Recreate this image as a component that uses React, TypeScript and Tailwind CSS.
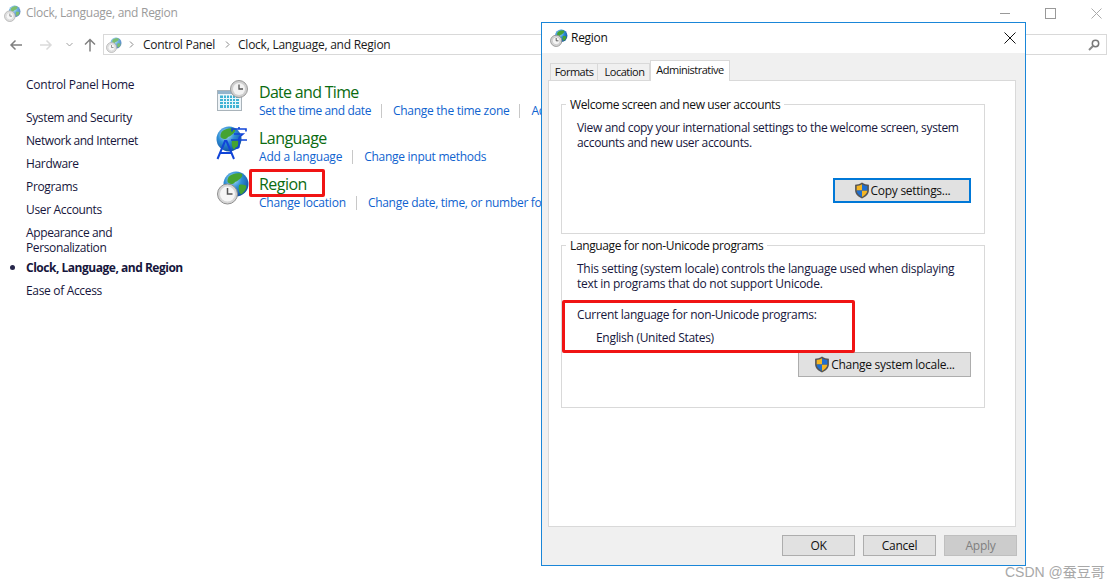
import React from "react";

const Globe = ({ id, cx, cy, r }: { id: string; cx: number; cy: number; r: number }) => (
  <>
    <defs>
      <radialGradient id={id} cx="0.38" cy="0.32" r="0.75">
        <stop offset="0" stopColor="#bfe6f5" />
        <stop offset="0.45" stopColor="#2f8fd6" />
        <stop offset="1" stopColor="#0f4a9c" />
      </radialGradient>
    </defs>
    <circle cx={cx} cy={cy} r={r} fill={`url(#${id})`} />
    <path
      transform={`translate(${cx - r} ${cy - r}) scale(${r / 12})`}
      d="M5 5c3-3 8-4 12-3 2 1 1 3-1 5-2 1-3 3-5 3-1 2-4 3-6 1C3 10 4 7 5 5zM15 13c3-1 6 0 7 1 0 3-2 6-5 8-2-1-3-6-2-9z"
      fill="#45a332"
    />
  </>
);

const ClockGlobe = ({ size = 16, id, className = "" }: { size?: number; id: string; className?: string }) => (
  <svg width={size} height={size} viewBox="0 0 32 32" className={`shrink-0 ${className}`}>
    <Globe id={id} cx={20} cy={12} r={11} />
    <circle cx="11" cy="21" r="10" fill="#d8d8d8" stroke="#8d8d8d" strokeWidth="1.500" />
    <circle cx="11" cy="21" r="7" fill="#f4f4f4" stroke="#b5b5b5" />
    <path d="M11 16v5h4" fill="none" stroke="#444" strokeWidth="1.500" />
  </svg>
);

const CalendarIcon = () => (
  <svg width="32" height="32" viewBox="0 0 32 32" className="mt-[-2px]">
    <rect x="1.500" y="10.500" width="24" height="20" fill="#eef4f8" stroke="#a9b3ba" />
    <rect x="2" y="11" width="23" height="3" fill="#93b4cc" />
    <rect x="4" y="15.500" width="19" height="12.500" fill="#3fb2d4" />
    <path d="M7.500 15v13M10.500 15v13M13.500 15v13M16.500 15v13M19.500 15v13M4 18.500h19M4 21.500h19M4 24.500h19" stroke="#e8f6fb" strokeWidth="1" />
    <circle cx="23" cy="9" r="8.500" fill="#cfcfcf" stroke="#9a9a9a" />
    <circle cx="23" cy="9" r="6" fill="#f3f3f3" />
    <path d="M23 4.500V9h4" fill="none" stroke="#555" strokeWidth="1.300" />
  </svg>
);

const LanguageIcon = () => (
  <svg width="33" height="34" viewBox="0 0 33 34" className="mt-[-2px] ml-[-1px]">
    <Globe id="lang-globe" cx={14} cy={13} r={12.500} />
    <path d="M2.500 33L10 15h1.500L19 33M5.500 27h10.500" fill="none" stroke="#1144d8" strokeWidth="2" />
    <path d="M17 5.500v-2.500h14v2.500M24 1v2M19 8h9l-4 3.500M16 14h16M24 11.500v9c0 1.500-1 2-4 2" fill="none" stroke="#1144d8" strokeWidth="1.600" />
  </svg>
);

const RegionIcon = () => (
  <svg width="33" height="34" viewBox="0 0 33 34" className="mt-[-3px]">
    <Globe id="region-globe" cx={20} cy={13} r={12.500} />
    <circle cx="11.500" cy="23" r="10" fill="#d6d6d6" stroke="#8f8f8f" />
    <circle cx="11.500" cy="23" r="7.500" fill="#f6f6f6" />
    <path d="M11.500 17v6h5" fill="none" stroke="#555" strokeWidth="1.500" />
  </svg>
);

const Shield = () => (
  <svg width="16" height="17" viewBox="0 0 15 16" className="shrink-0">
    <path d="M7.500.500C5.500 2 3 2.500 1 2.500V8c0 3.500 3 6 6.500 7.500C11 14 14 11.500 14 8V2.500c-2 0-4.500-.5-6.500-2z" fill="#555" />
    <path d="M7.500 2C6 3 4 3.500 2.500 3.700V8h5zM7.500 8v6c2.500-1.200 5-3.200 5-6z" fill="#f5b623" />
    <path d="M7.500 2c1.500 1 3.500 1.500 5 1.700V8h-5zM7.500 8v6C5 12.800 2.500 10.800 2.500 8z" fill="#1f6fd0" />
  </svg>
);

const Sep = () => <span className="ml-[10px] mr-[11px] h-[14px] w-px shrink-0 bg-[#c8c8c8]" />;

const L = ({ children, className }: { children: React.ReactNode; className: string }) => (
  <span className={`whitespace-nowrap text-[12px] leading-[16px] text-[#0f63cf] ${className}`}>{children}</span>
);

type LinkDef = { text: string; className: string };

const Category = ({ icon, title, titleClass, links }: { icon: React.ReactNode; title: string; titleClass: string; links: LinkDef[] }) => (
  <div className="flex h-[46px]">
    <div className="w-[43px] shrink-0">{icon}</div>
    <div className="min-w-0">
      <div className={`h-[21px] whitespace-nowrap text-[16px] leading-[21px] text-[#0b6b10] ${titleClass}`}>{title}</div>
      <div className="flex items-center">
        {links.map((l, i) => (
          <React.Fragment key={l.text}>
            {i > 0 && <Sep />}
            <L className={l.className}>{l.text}</L>
          </React.Fragment>
        ))}
      </div>
    </div>
  </div>
);

const Side = ({ children, className = "tracking-[-0.33px]" }: { children: React.ReactNode; className?: string }) => (
  <div className={`text-[12px] leading-[15px] text-[#16163c] ${className}`}>{children}</div>
);

const Btn = ({ children, className = "" }: { children: React.ReactNode; className?: string }) => (
  <button className={`flex h-[21px] w-[73px] items-center justify-center border text-[12px] tracking-[-0.28px] ${className}`}>{children}</button>
);

const Legend = ({ children }: { children: React.ReactNode }) => (
  <div className="absolute left-[4px] top-[-8px] whitespace-nowrap bg-white px-[4px] text-[12px] leading-[15px] tracking-[-0.38px] text-[#111]">{children}</div>
);

const P = ({ children, className = "" }: { children: React.ReactNode; className?: string }) => (
  <div className={`text-[12px] leading-[15px] text-[#16163c] ${className}`}>{children}</div>
);

const Tab = ({ children, className = "" }: { children: React.ReactNode; className?: string }) => (
  <div className={`flex items-center justify-center border border-b-0 border-[#d9d9d9] text-[11px] tracking-[-0.5px] text-[#111] ${className}`}>{children}</div>
);

const Chevron = ({ className = "" }: { className?: string }) => (
  <svg width="5" height="7" viewBox="0 0 5 7" className={`shrink-0 ${className}`}><path d="M1 .5l3 3-3 3" fill="none" stroke="#888" /></svg>
);

export default function App() {
  return (
    <div className="relative h-[588px] w-[1120px] overflow-hidden bg-white font-['Open_Sans','Noto_Sans',sans-serif]">
      {/* Title bar */}
      <div className="flex h-[26px] items-center pl-[4px]">
        <ClockGlobe size={17} id="g1" className="opacity-70" />
        <span className="ml-[5px] text-[12px] tracking-[-0.28px] text-[#9b9b9b]">Clock, Language, and Region</span>
        <div className="ml-auto flex items-center pr-[18px]">
          <svg width="10" height="10" viewBox="0 0 10 10" className="mr-[35px]"><path d="M0 5.500h10" stroke="#999" /></svg>
          <svg width="11" height="11" viewBox="0 0 11 11" className="mr-[35px]"><rect x=".5" y=".5" width="10" height="10" fill="none" stroke="#999" /></svg>
          <svg width="11" height="11" viewBox="0 0 11 11"><path d="M.5.500l10 10M10.500.500l-10 10" stroke="#aaa" /></svg>
        </div>
      </div>
      {/* Nav bar */}
      <div className="mt-[8px] flex h-[21px] items-center">
        <svg width="14" height="12" viewBox="0 0 14 12" className="ml-[9px]"><path d="M13 6H2M6.500 1.500L2 6l4.500 4.500" fill="none" stroke="#808080" strokeWidth="1.500" /></svg>
        <svg width="14" height="12" viewBox="0 0 14 12" className="ml-[16px]"><path d="M1 6h11M7.500 1.500L12 6l-4.500 4.500" fill="none" stroke="#dadada" strokeWidth="1.500" /></svg>
        <svg width="7" height="5" viewBox="0 0 7 5" className="ml-[13px]"><path d="M.5 1l3 3 3-3" fill="none" stroke="#a0a0a0" /></svg>
        <svg width="12" height="14" viewBox="0 0 12 14" className="ml-[11px]"><path d="M6 13.500V2M1 6.500L6 1.500l5 5" fill="none" stroke="#808080" strokeWidth="1.500" /></svg>
        <div className="ml-[7px] flex h-[21px] w-[972px] shrink-0 items-center border border-r-0 border-[#d9d9d9] pl-[2px]">
          <ClockGlobe size={16} id="g2" className="opacity-70" />
          <Chevron className="ml-[7px]" />
          <span className="ml-[9px] text-[12px] tracking-[-0.28px] text-[#1a1a1a]">Control Panel</span>
          <Chevron className="ml-[10px]" />
          <span className="ml-[8px] text-[12px] tracking-[-0.25px] text-[#1a1a1a]">Clock, Language, and Region</span>
        </div>
        <div className="flex h-[21px] w-[32px] shrink-0 items-center justify-end border border-l-0 border-[#d9d9d9] pr-[6px]">
          <svg width="12" height="12" viewBox="0 0 12 12"><circle cx="7.500" cy="4.500" r="3.200" fill="none" stroke="#777" strokeWidth="1.500" /><path d="M5 7l-4 4" stroke="#888" strokeWidth="2" /></svg>
        </div>
      </div>
      {/* Body */}
      <div className="flex">
        <div className="w-[216px] shrink-0 pl-[26px] pt-[22px]">
          <Side className="tracking-[-0.25px]">Control Panel Home</Side>
          <Side className="mt-[18px] tracking-[-0.36px]">System and Security</Side>
          <Side className="mt-[8px] tracking-[-0.43px]">Network and Internet</Side>
          <Side className="mt-[8px] tracking-[-0.33px]">Hardware</Side>
          <Side className="mt-[8px] tracking-[-0.33px]">Programs</Side>
          <Side className="mt-[8px] tracking-[-0.33px]">User Accounts</Side>
          <Side className="mt-[8px] tracking-[-0.38px]">Appearance and<br />Personalization</Side>
          <Side className="relative mt-[5px] font-bold tracking-[-0.48px]">
            <span className="absolute left-[-16px] top-[5px] h-[5px] w-[5px] rounded-full bg-[#26264a]" />
            Clock, Language, and Region
          </Side>
          <Side className="mt-[8px] tracking-[-0.33px]">Ease of Access</Side>
        </div>
        <div className="w-[325px] shrink-0 overflow-hidden pt-[27px]">
          <Category
            icon={<CalendarIcon />}
            title="Date and Time"
            titleClass="tracking-[-0.7px]"
            links={[
              { text: "Set the time and date", className: "tracking-[-0.38px]" },
              { text: "Change the time zone", className: "tracking-[-0.28px]" },
              { text: "Ad", className: "tracking-[-0.28px]" },
            ]}
          />
          <Category
            icon={<LanguageIcon />}
            title="Language"
            titleClass="tracking-[-0.55px]"
            links={[
              { text: "Add a language", className: "tracking-[-0.2px]" },
              { text: "Change input methods", className: "tracking-[-0.28px]" },
            ]}
          />
          <Category
            icon={<RegionIcon />}
            title="Region"
            titleClass="tracking-[-0.55px]"
            links={[
              { text: "Change location", className: "tracking-[-0.2px]" },
              { text: "Change date, time, or number formats", className: "tracking-[-0.28px]" },
            ]}
          />
        </div>
      </div>

      {/* Red annotation on Region */}
      <div className="absolute left-[249px] top-[169px] h-[28px] w-[76px] rounded-[2px] border-[3px] border-[#f01414]" />

      {/* Region dialog */}
      <div className="absolute left-[541px] top-[22px] flex h-[544px] w-[485px] flex-col border border-[#1a86d8] bg-[#f0f0f0]">
        <div className="flex h-[30px] shrink-0 items-center bg-white pl-[8px] pr-[9px]">
          <ClockGlobe size={18} id="g3" />
          <span className="ml-[3px] text-[12px] leading-[16px] tracking-[-0.28px] text-[#111]">Region</span>
          <svg width="12" height="12" viewBox="0 0 12 12" className="ml-auto"><path d="M.5.500l11 11M11.500.500l-11 11" stroke="#111" /></svg>
        </div>

        {/* Tabs */}
        <div className="flex h-[27px] shrink-0 items-end pl-[8px]">
          <Tab className="h-[17px] w-[48px] bg-[#f0f0f0]">Formats</Tab>
          <Tab className="h-[17px] w-[52px] border-l-0 bg-[#f0f0f0] pl-[2px]">Location</Tab>
          <Tab className="relative z-10 mb-[-1px] h-[21px] w-[80px] bg-white pb-[2px]">Administrative</Tab>
        </div>
        {/* Panel */}
        <div className="ml-[6px] flex h-[447px] w-[468px] shrink-0 flex-col border border-[#d9d9d9] bg-white px-[12px] pt-[23px]">
          <div className="relative h-[130px] w-[424px] shrink-0 border border-[#d9d9d9]">
            <Legend>Welcome screen and new user accounts</Legend>
            <P className="px-[15px] pt-[15px] tracking-[-0.34px]">View and copy your international settings to the welcome screen, system<br />accounts and new user accounts.</P>
            <div className="flex justify-end pr-[13px] pt-[28px]">
              <button className="flex h-[25px] w-[138px] items-center justify-center gap-[1px] border-[2px] border-[#0078d7] bg-[#e1e1e1] text-[12px] tracking-[-0.28px] text-[#111]"><Shield />Copy settings...</button>
            </div>
          </div>
          <div className="relative mt-[11px] h-[163px] w-[424px] shrink-0 border border-[#d9d9d9]">
            <Legend>Language for non-Unicode programs</Legend>
            <P className="px-[15px] pt-[15px] tracking-[-0.27px]">This setting (system locale) controls the language used when displaying<br />text in programs that do not support Unicode.</P>
            <P className="px-[15px] pt-[16px] tracking-[-0.3px]">Current language for non-Unicode programs:</P>
            <P className="pl-[34px] pt-[8px] tracking-[-0.3px]">English (United States)</P>
            <div className="flex justify-end pr-[13px] pt-[7px]">
              <button className="flex h-[25px] w-[173px] items-center justify-center gap-[1px] border border-[#adadad] bg-[#e1e1e1] text-[12px] tracking-[-0.28px] text-[#111]"><Shield />Change system locale...</button>
            </div>
            <div className="absolute left-0 top-[54px] h-[53px] w-[293px] rounded-[2px] border-[3px] border-[#f01414]" />
          </div>
        </div>
        {/* Footer */}
        <div className="flex justify-end gap-[8px] pr-[8px] pt-[8px]">
          <Btn className="border-[#adadad] bg-[#e1e1e1] text-[#111]">OK</Btn>
          <Btn className="border-[#adadad] bg-[#e1e1e1] text-[#111]">Cancel</Btn>
          <Btn className="border-[#bfbfbf] bg-[#cccccc] text-[#7f7f7f]">Apply</Btn>
        </div>
      </div>

      {/* Watermark */}
      <div className="absolute left-[1005px] top-[563px] whitespace-nowrap font-['Liberation_Sans','Noto_Sans_CJK_SC',sans-serif] text-[14px] leading-[18px] text-[#a8a8a8]">CSDN @蚕豆哥</div>
    </div>
  );
}
